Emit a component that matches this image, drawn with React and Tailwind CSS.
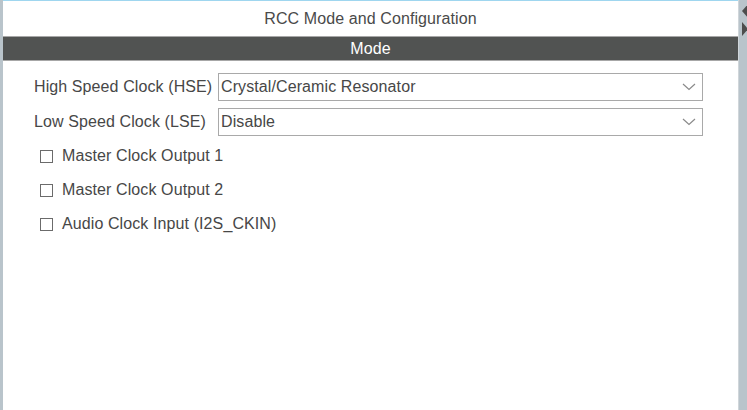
import React from 'react';

function Chevron() {
  return (
    <svg width="14" height="8" viewBox="0 0 14 8" className="shrink-0">
      <path d="M1 1 L7 6.5 L13 1" fill="none" stroke="#8a8a8a" strokeWidth="1.2" />
    </svg>
  );
}

function Select({ value }) {
  return (
    <div className="flex-1 flex items-center justify-between border border-[#a9a9a9] bg-white pl-[2px] pr-[6px] h-full">
      <span>{value}</span>
      <Chevron />
    </div>
  );
}

function Check({ label }) {
  return (
    <div className="flex items-center h-[34px] pl-[37px]">
      <div className="w-[13px] h-[13px] border border-[#6b6b6b] bg-white mr-[9px]" />
      <span>{label}</span>
    </div>
  );
}

export default function App() {
  return (
    <div
      className="w-[747px] h-[410px] flex bg-[#b9c4cb] overflow-hidden text-[16px] text-[#474747] tracking-[0.1px]"
      style={{ fontFamily: '"Liberation Sans", Arial, sans-serif' }}
    >
      {/* left strip */}
      <div className="w-[3px] shrink-0 bg-[#b9c4cb]" />

      {/* main panel */}
      <div className="w-[735px] shrink-0 flex flex-col bg-white border-t border-[#9fd6ef]">
        <div className="h-[35px] flex items-center justify-center text-[#4a4a4a]">
          RCC Mode and Configuration
        </div>
        <div className="h-[25px] flex items-center justify-center bg-[#515352] text-white border-t border-b border-[#a7a7a7]">
          Mode
        </div>

        <div className="flex flex-col pt-[12px]">
          <div className="flex items-center h-[28px] pl-[31px] pr-[35px]">
            <span className="w-[184px] shrink-0">High Speed Clock (HSE)</span>
            <Select value="Crystal/Ceramic Resonator" />
          </div>
          <div className="flex items-center h-[28px] pl-[31px] pr-[35px] mt-[7px]">
            <span className="w-[184px] shrink-0">Low Speed Clock (LSE)</span>
            <Select value="Disable" />
          </div>

          <div className="mt-[3px] flex flex-col">
            <Check label="Master Clock Output 1" />
            <Check label="Master Clock Output 2" />
            <Check label="Audio Clock Input (I2S_CKIN)" />
          </div>
        </div>
      </div>

      {/* right strip with collapse arrows */}
      <div className="flex-1 border-l border-[#d0d6da] relative">
        <svg width="10" height="40" viewBox="0 0 10 40" className="absolute left-[1px] top-[2px]">
          <path d="M8 2 L2 9 L8 16 Z" fill="#4d4d4d" />
          <path d="M2 20 L8 27 L2 34 Z" fill="#4d4d4d" />
        </svg>
      </div>
    </div>
  );
}
